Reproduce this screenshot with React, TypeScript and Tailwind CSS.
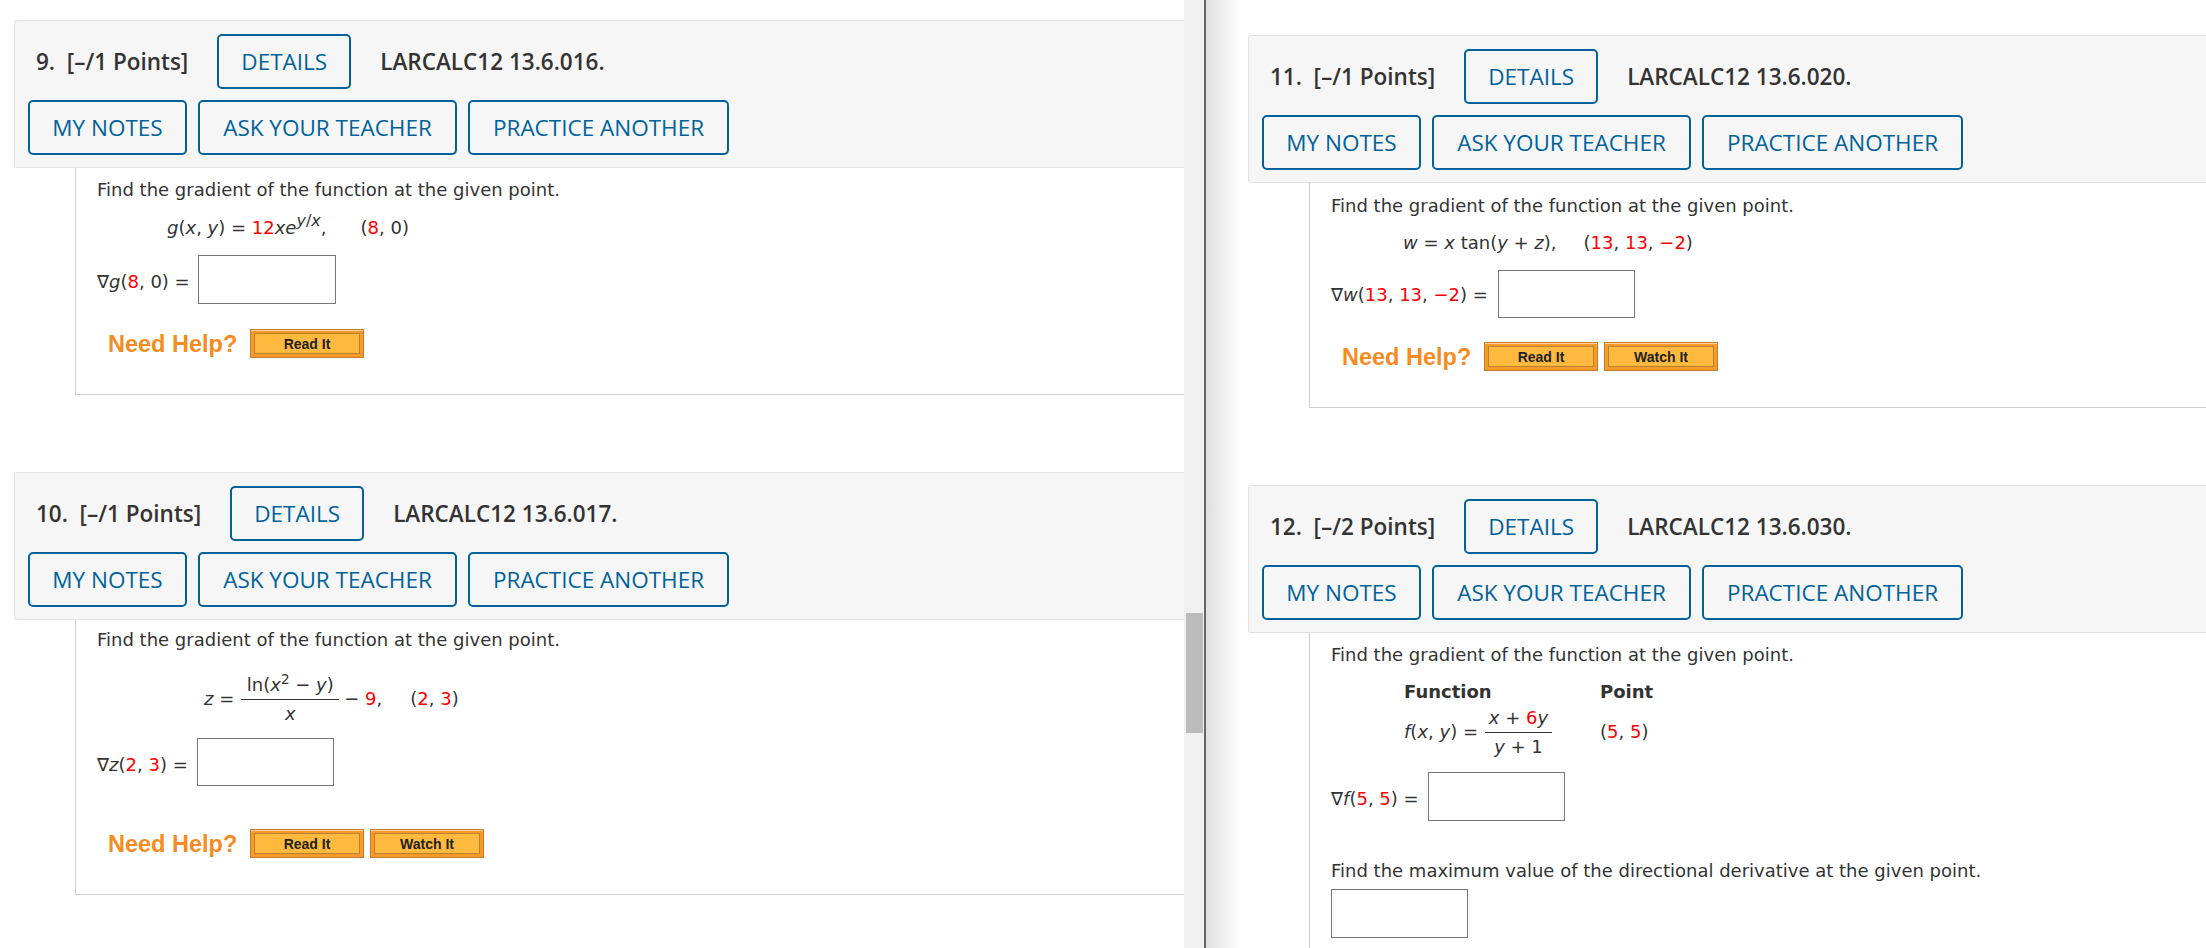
import type { ReactNode } from 'react';

const R = ({ children }: { children: ReactNode }) => <span className="text-[#ff0000]">{children}</span>;
const V = ({ children }: { children: ReactNode }) => <i>{children}</i>;

function ActionButton({ children, className = '' }: { children: ReactNode; className?: string }) {
  return (
    <button className={`flex h-[55px] items-center justify-center rounded-[5px] border-2 border-[#00629b] text-[22.5px] text-[#00629b] ${className}`}>
      {children}
    </button>
  );
}

function Blank({ className = 'w-[138px] h-[49px]' }: { className?: string }) {
  return <input className={`block border border-[#767676] bg-white ${className}`} />;
}

function Frac({ top, bottom, className = '' }: { top: ReactNode; bottom: ReactNode; className?: string }) {
  return (
    <span className={`mr-[5px] ml-[7px] inline-flex flex-col items-center ${className}`}>
      <span className="w-full border-b border-[#333] pb-[2px] text-center leading-[25px] whitespace-nowrap">{top}</span>
      <span className="pt-[2px] text-center leading-[24px]">{bottom}</span>
    </span>
  );
}

function HelpButton({ children }: { children: ReactNode }) {
  return (
    <span className="flex h-[29px] w-[114px] items-center justify-center border border-[#c27c2c] bg-[#f79a2a] p-[3px] shadow-[inset_0_1px_0_#fdd0a0]">
      <span className="flex h-full w-full items-center justify-center border border-[#b9802f] bg-[#ffb93f] font-['Liberation_Sans',sans-serif] text-[14px] font-bold text-[#222]">
        {children}
      </span>
    </span>
  );
}

function NeedHelp({ watch, className }: { watch?: boolean; className: string }) {
  return (
    <div className={`ml-[11px] flex items-center ${className}`}>
      <span className="w-[142px] font-['Liberation_Sans',sans-serif] text-[23.5px] font-bold text-[#f68b1f]">Need Help?</span>
      <HelpButton>Read It</HelpButton>
      {watch && <span className="ml-[6px]"><HelpButton>Watch It</HelpButton></span>}
    </div>
  );
}

function Question({
  num,
  points,
  code,
  bodyClass,
  children,
}: {
  num: string;
  points: string;
  code: string;
  bodyClass: string;
  children: ReactNode;
}) {
  return (
    <section>
      <header className="rounded-l-[3px] border border-r-0 border-[#e2e2e2] bg-[#f6f6f6] pt-[13px] pb-[12px] pl-[13px] font-['Open_Sans',sans-serif]">
        <div className="flex h-[55px] items-center pl-[8px] text-[22.5px] font-semibold text-[#333]">
          <span className="whitespace-pre">{num}  [–/{points} Points]</span>
          <button className="mr-[29px] ml-[29px] flex h-[55px] w-[134px] items-center justify-center rounded-[5px] border-2 border-[#00629b] font-normal text-[#00629b]">
            DETAILS
          </button>
          <span>{code}</span>
        </div>
        <div className="mt-[11px] flex gap-[11px]">
          <ActionButton className="w-[159px]">MY NOTES</ActionButton>
          <ActionButton className="w-[259px]">ASK YOUR TEACHER</ActionButton>
          <ActionButton className="w-[261px]">PRACTICE ANOTHER</ActionButton>
        </div>
      </header>
      <div className={`ml-[61px] border-l border-[#cfcfcf] pl-[21px] font-['DejaVu_Sans',sans-serif] text-[18px] leading-[22px] text-[#333] ${bodyClass}`}>
        {children}
      </div>
    </section>
  );
}

export default function App() {
  return (
    <div className="flex h-[948px] w-[2206px] overflow-hidden bg-white">
      <div className="h-full w-[1184px] shrink-0 pt-[20px] pl-[14px]">
        <Question num="9." points="1" code="LARCALC12 13.6.016." bodyClass="border-b pt-[11px] pb-[36px]">
          <p>Find the gradient of the function at the given point.</p>
          <p className="mt-[16px] ml-[70px]">
            <V>g</V>(<V>x</V>, <V>y</V>) = <R>12</R><V>xe</V><sup className="text-[16px]"><V>y</V>/<V>x</V></sup>,<span className="ml-[34px]">(<R>8</R>, 0)</span>
          </p>
          <div className="mt-[16px] flex items-center gap-[8px]">
            <span className="pt-[5px]">∇<V>g</V>(<R>8</R>, 0) =</span>
            <Blank />
          </div>
          <NeedHelp className="mt-[25px]" />
        </Question>

        <div className="mt-[77px]">
          <Question num="10." points="1" code="LARCALC12 13.6.017." bodyClass="border-b pt-[9px] pb-[36px]">
            <p>Find the gradient of the function at the given point.</p>
            <p className="mt-[21px] ml-[107px] flex items-center">
              <span><V>z</V> =</span>
              <Frac
                className="w-[98px]"
                top={<>ln(<V>x</V><sup>2</sup> − <V>y</V>)</>}
                bottom={<V>x</V>}
              />
              <span>− <R>9</R>,</span>
              <span className="ml-[28px]">(<R>2</R>, <R>3</R>)</span>
            </p>
            <div className="mt-[12px] flex items-center gap-[9px]">
              <span className="pt-[5px]">∇<V>z</V>(<R>2</R>, <R>3</R>) =</span>
              <Blank className="h-[48px] w-[137px]" />
            </div>
            <NeedHelp watch className="mt-[43px]" />
          </Question>
        </div>
      </div>

      {/* scrollbar of the left pane */}
      <div className="h-full w-[20px] shrink-0 bg-[#f0f0f0] pt-[613px] pl-[2px]">
        <div className="h-[120px] w-[17px] bg-[#bbbbbb]" />
      </div>
      <div className="h-full w-[2px] shrink-0 bg-[#666666]" />

      <div className="relative h-full min-w-0 flex-1 pt-[35px] pl-[42px]">
        <div className="pointer-events-none absolute inset-y-0 left-0 w-[36px] bg-gradient-to-r from-[#e0e0e0] to-white" />
        <Question num="11." points="1" code="LARCALC12 13.6.020." bodyClass="border-b pt-[12px] pb-[36px]">
          <p>Find the gradient of the function at the given point.</p>
          <p className="mt-[15px] ml-[72px]">
            <V>w</V> = <V>x</V> tan(<V>y</V> + <V>z</V>),<span className="ml-[27px]">(<R>13</R>, <R>13</R>, <R>−2</R>)</span>
          </p>
          <div className="mt-[16px] flex items-center gap-[10px]">
            <span className="pt-[2px]">∇<V>w</V>(<R>13</R>, <R>13</R>, <R>−2</R>) =</span>
            <Blank className="h-[48px] w-[137px]" />
          </div>
          <NeedHelp watch className="mt-[24px]" />
        </Question>

        <div className="mt-[77px]">
          <Question num="12." points="2" code="LARCALC12 13.6.030." bodyClass="h-[400px] pt-[11px]">
            <p>Find the gradient of the function at the given point.</p>
            <div className="mt-[15px] ml-[73px] grid grid-cols-[196px_auto] items-center justify-start gap-y-[2px]">
              <b>Function</b>
              <b>Point</b>
              <span className="flex items-center">
                <span className="whitespace-pre"><V>f</V>(<V>x</V>, <V>y</V>) =</span>
                <Frac className="w-[67px]" top={<><V>x</V> + <R>6</R><V>y</V></>} bottom={<><V>y</V> + 1</>} />
              </span>
              <span>(<R>5</R>, <R>5</R>)</span>
            </div>
            <div className="mt-[13px] flex items-center gap-[9px]">
              <span className="pt-[5px]">∇<V>f</V>(<R>5</R>, <R>5</R>) =</span>
              <Blank className="h-[49px] w-[137px]" />
            </div>
            <p className="mt-[39px]">Find the maximum value of the directional derivative at the given point.</p>
            <div className="mt-[7px]">
              <Blank className="h-[49px] w-[137px]" />
            </div>
          </Question>
        </div>
      </div>
    </div>
  );
}
